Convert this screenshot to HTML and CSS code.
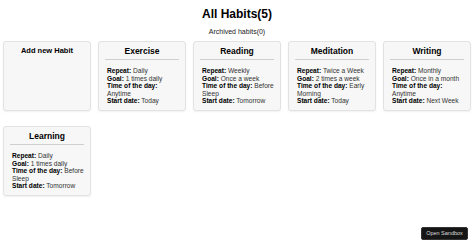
FILE: index.html
```html
<!DOCTYPE html>
<html>
<head>
<meta charset="utf-8">
<link rel="stylesheet" href="styles.css">
</head>
<body>
<div class="app">
  <h1 class="title">All Habits(5)</h1>
  <div class="archived">Archived habits(0)</div>
  <div class="grid">
    <div class="card add">
      <div class="add-title">Add new Habit</div>
    </div>
    <div class="card">
      <div class="card-title">Exercise</div>
      <div class="card-body">
        <div><b>Repeat:</b> Daily</div>
        <div><b>Goal:</b> 1 times daily</div>
        <div><b>Time of the day:</b> Anytime</div>
        <div><b>Start date:</b> Today</div>
      </div>
    </div>
    <div class="card">
      <div class="card-title">Reading</div>
      <div class="card-body">
        <div><b>Repeat:</b> Weekly</div>
        <div><b>Goal:</b> Once a week</div>
        <div><b>Time of the day:</b> Before Sleep</div>
        <div><b>Start date:</b> Tomorrow</div>
      </div>
    </div>
    <div class="card">
      <div class="card-title">Meditation</div>
      <div class="card-body">
        <div><b>Repeat:</b> Twice a Week</div>
        <div><b>Goal:</b> 2 times a week</div>
        <div><b>Time of the day:</b> Early Morning</div>
        <div><b>Start date:</b> Today</div>
      </div>
    </div>
    <div class="card">
      <div class="card-title">Writing</div>
      <div class="card-body">
        <div><b>Repeat:</b> Monthly</div>
        <div><b>Goal:</b> Once in a month</div>
        <div><b>Time of the day:</b> Anytime</div>
        <div><b>Start date:</b> Next Week</div>
      </div>
    </div>
    <div class="card">
      <div class="card-title">Learning</div>
      <div class="card-body">
        <div><b>Repeat:</b> Daily</div>
        <div><b>Goal:</b> 1 times daily</div>
        <div><b>Time of the day:</b> Before Sleep</div>
        <div><b>Start date:</b> Tomorrow</div>
      </div>
    </div>
  </div>
</div>
<button class="sandbox">Open Sandbox</button>
</body>
</html>
```

FILE: styles.css
```css
html, body {
  margin: 0;
  padding: 0;
  background: #fff;
}
body {
  font-family: "Liberation Sans", Arial, sans-serif;
  color: #000;
  width: 474px;
  height: 248px;
  overflow: hidden;
}
.app {
  padding: 7px 3px 0 3px;
}
.title {
  margin: 0;
  text-align: center;
  font-size: 12px;
  font-weight: bold;
  line-height: 14px;
}
.archived {
  margin-top: 6px;
  text-align: center;
  font-size: 7px;
  line-height: 9px;
  color: #222;
}
.grid {
  margin-top: 5px;
  display: flex;
  flex-wrap: wrap;
  column-gap: 7px;
  row-gap: 15px;
}
.card {
  box-sizing: border-box;
  width: 88px;
  height: 70px;
  background: #f7f7f7;
  border: 1px solid #e2e2e2;
  border-radius: 3px;
  box-shadow: 0 1px 2px rgba(0,0,0,0.06);
  padding: 3px 6px 0 6px;
}
.add-title {
  text-align: center;
  font-size: 7.5px;
  font-weight: bold;
  line-height: 10px;
  margin-top: 1px;
}
.card-title {
  text-align: center;
  font-size: 8.5px;
  font-weight: bold;
  line-height: 11px;
  padding-top: 1px;
  padding-bottom: 2px;
  border-bottom: 1px solid #cfcfcf;
}
.card-body {
  padding: 7px 0 0 2px;
  font-size: 6.6px;
  line-height: 7.5px;
  color: #333;
}
.card-body b {
  color: #000;
}
.sandbox {
  position: absolute;
  left: 421px;
  top: 227px;
  width: 47px;
  height: 13px;
  padding: 0;
  border: 1px solid #333;
  border-radius: 2px;
  background: #151515;
  color: #ddd;
  font-family: "Liberation Sans", Arial, sans-serif;
  font-size: 5.5px;
  line-height: 11px;
}
```
